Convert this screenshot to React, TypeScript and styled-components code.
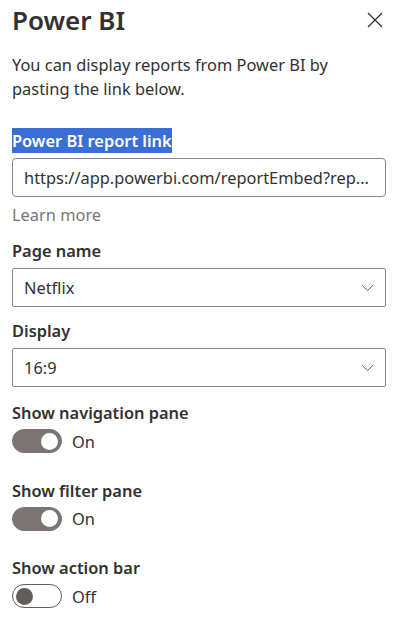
import styled, { createGlobalStyle } from 'styled-components';

const GlobalStyle = createGlobalStyle`
  body {
    margin: 0;
    background: #ffffff;
    font-family: 'Segoe UI', 'Noto Sans', 'Open Sans', sans-serif;
    color: #323130;
  }
`;

const ChevronDown = () => (
  <svg width="13" height="8" viewBox="0 0 13 8" fill="none">
    <path d="M0.8 1l5.7 5.6L12.2 1" stroke="#605e5c" strokeWidth="1" />
  </svg>
);

const CloseIcon = () => (
  <svg width="16" height="16" viewBox="0 0 16 16" fill="none">
    <path d="M1 1l14 14M15 1L1 15" stroke="#323130" strokeWidth="1.3" />
  </svg>
);

export default function App() {
  return (
    <>
      <GlobalStyle />
      <Panel>
        <Header>
          <Title>Power BI</Title>
          <CloseButton aria-label="Close">
            <CloseIcon />
          </CloseButton>
        </Header>
        <Description>You can display reports from Power BI by pasting the link below.</Description>

        <Field $gap={28}>
          <Label>
            <Selected>Power BI report link</Selected>
          </Label>
          <TextBox>https://app.powerbi.com/reportEmbed?rep...</TextBox>
          <LearnMore>Learn more</LearnMore>
        </Field>

        <Field $gap={12}>
          <Label>Page name</Label>
          <Dropdown>
            <span>Netflix</span>
            <ChevronDown />
          </Dropdown>
        </Field>

        <Field $gap={12}>
          <Label>Display</Label>
          <Dropdown>
            <span>16:9</span>
            <ChevronDown />
          </Dropdown>
        </Field>

        <ToggleField label="Show navigation pane" on />
        <ToggleField label="Show filter pane" on />
        <ToggleField label="Show action bar" on={false} />
      </Panel>
    </>
  );
}

const ToggleField = ({ label, on }: { label: string; on: boolean }) => {
  return (
    <ToggleWrapper>
      <ToggleLabel>{label}</ToggleLabel>
      <ToggleRow>
        <Track $on={on}>
          <Knob $on={on} />
        </Track>
        <State>{on ? 'On' : 'Off'}</State>
      </ToggleRow>
    </ToggleWrapper>
  );
};

const Panel = styled.div`
  width: 398px;
  padding: 4px 12px 0;
  box-sizing: border-box;
`;

const Header = styled.div`
  display: flex;
  justify-content: space-between;
  align-items: center;
  height: 32px;
`;

const Title = styled.h1`
  margin: 0;
  font-size: 26px;
  font-weight: 600;
  line-height: 32px;
`;

const CloseButton = styled.button`
  border: none;
  background: none;
  padding: 0;
  margin-right: 3px;
  display: flex;
`;

const Description = styled.p`
  margin: 17px 0 0;
  font-size: 16.4px;
  line-height: 24px;
`;

const Field = styled.div<{ $gap: number }>`
  margin-top: ${(p) => p.$gap}px;
  display: flex;
  flex-direction: column;
`;

const Label = styled.div`
  font-size: 16.4px;
  font-weight: 600;
  line-height: 24px;
  padding-bottom: 5px;
`;

const ToggleLabel = styled(Label)`
  padding-bottom: 4px;
`;

const Selected = styled.span`
  background: #3b6fd6;
  color: #ffffff;
  padding: 1px 0;
`;

const TextBox = styled.div`
  height: 39px;
  box-sizing: border-box;
  border: 1px solid #8a8886;
  border-radius: 4px;
  padding: 0 11px;
  display: flex;
  align-items: center;
  font-size: 16.4px;
  white-space: nowrap;
  overflow: hidden;
`;

const LearnMore = styled.div`
  color: #797775;
  font-size: 16.4px;
  line-height: 24px;
  margin-top: 6px;
`;

const Dropdown = styled.div`
  height: 39px;
  box-sizing: border-box;
  border: 1px solid #8a8886;
  border-radius: 2px;
  padding: 0 11px;
  display: flex;
  align-items: center;
  justify-content: space-between;
  font-size: 16.4px;
`;

const ToggleWrapper = styled.div`
  margin-top: 14px;
  display: flex;
  flex-direction: column;
`;

const ToggleRow = styled.div`
  display: flex;
  align-items: center;
  gap: 10px;
  height: 24px;
  margin-bottom: 11.5px;
`;

const Track = styled.div<{ $on: boolean }>`
  width: 50px;
  height: 24px;
  box-sizing: border-box;
  border-radius: 12px;
  border: 1px solid ${(p) => (p.$on ? '#7a7574' : '#605e5c')};
  background: ${(p) => (p.$on ? '#7a7574' : '#ffffff')};
  display: flex;
  align-items: center;
  justify-content: ${(p) => (p.$on ? 'flex-end' : 'flex-start')};
  padding: 0 3px;
`;

const Knob = styled.div<{ $on: boolean }>`
  width: 17px;
  height: 17px;
  border-radius: 50%;
  background: ${(p) => (p.$on ? '#ffffff' : '#605e5c')};
`;

const State = styled.span`
  font-size: 16.4px;
`;
